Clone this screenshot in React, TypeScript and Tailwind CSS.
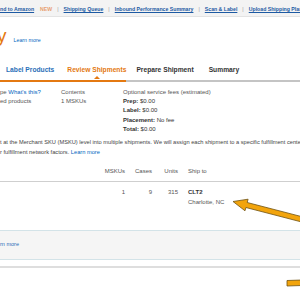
import React from "react";

const font = { fontFamily: '"Liberation Sans", Arial, sans-serif' };

function arrowPoints(tipX: number, tipY: number, endX: number, endY: number) {
  const dx = endX - tipX;
  const dy = endY - tipY;
  const len = Math.hypot(dx, dy);
  const ux = dx / len;
  const uy = dy / len;
  const px = -uy;
  const py = ux;
  const head = 14;
  const hw = 6;
  const sw = 2.6;
  const bx = tipX + ux * head;
  const by = tipY + uy * head;
  const pts = [
    [tipX, tipY],
    [bx - px * hw, by - py * hw],
    [bx - px * sw, by - py * sw],
    [endX - px * sw, endY - py * sw],
    [endX + px * sw, endY + py * sw],
    [bx + px * sw, by + py * sw],
    [bx + px * hw, by + py * hw],
  ];
  return pts.map((p) => p[0].toFixed(1) + "," + p[1].toFixed(1)).join(" ");
}

function TopNav() {
  const sep = <span className="text-[#999] font-normal">|</span>;
  return (
    <div className="h-[17px] pt-[4px] bg-[#f3f3f3] border-b border-[#e3e3e3] flex items-center gap-[5px] whitespace-nowrap text-[5.2px] font-bold text-[#1d5aa3]">
      <span className="underline">nd to Amazon</span>
      <span className="text-[#e8a070] ml-[1px]">NEW</span>
      {sep}
      <span className="underline">Shipping Queue</span>
      {sep}
      <span className="underline">Inbound Performance Summary</span>
      {sep}
      <span className="underline">Scan &amp; Label</span>
      {sep}
      <span className="underline">Upload Shipping Plan</span>
    </div>
  );
}

function Tabs() {
  return (
    <div>
      <div className="h-[27px] pt-[7px] flex items-center whitespace-nowrap text-[6.7px] font-bold">
        <span className="ml-[6px] text-[#2a6fb8]">Label Products</span>
        <span className="ml-[13px] text-[#e47911] relative">
          Review Shipments
          <span className="absolute left-1/2 -translate-x-1/2 top-[11px] w-0 h-0 border-l-[3px] border-r-[3px] border-b-[3px] border-l-transparent border-r-transparent border-b-[#e47911]" />
        </span>
        <span className="ml-[10px] text-[#333]">Prepare Shipment</span>
        <span className="ml-[15px] text-[#333]">Summary</span>
      </div>
      <div className="flex h-[2px]">
        <div className="w-[126px] bg-[#e47911]" />
        <div className="flex-1 bg-[#c4c4c4]" />
      </div>
    </div>
  );
}

function Info() {
  return (
    <div className="pt-[6px] flex text-[6px] leading-[9.2px] text-[#555] whitespace-nowrap">
      <div className="w-[61px]">
        <div>
          pe <span className="text-[#0066c0]">What's this?</span>
        </div>
        <div>ed products</div>
      </div>
      <div className="w-[62px]">
        <div>Contents</div>
        <div>1 MSKUs</div>
      </div>
      <div className="text-[#333]">
        <div className="text-[#555]">Optional service fees (estimated)</div>
        <div>
          <b>Prep:</b> $0.00
        </div>
        <div>
          <b>Label:</b> $0.00
        </div>
        <div>
          <b>Placement:</b> No fee
        </div>
        <div>
          <b>Total:</b> $0.00
        </div>
      </div>
    </div>
  );
}

function Table() {
  return (
    <div className="mt-[9px] text-[6px] leading-[10px] text-[#555] whitespace-nowrap">
      <div className="flex h-[16px] border-b-[1.5px] border-[#cfcfcf]">
        <div className="w-[100px]" />
        <div className="w-[25px] text-right">MSKUs</div>
        <div className="w-[27px] text-right">Cases</div>
        <div className="w-[26px] text-right">Units</div>
        <div className="pl-[10px]">Ship to</div>
      </div>
      <div className="flex pt-[4.5px]">
        <div className="w-[100px]" />
        <div className="w-[25px] text-right">1</div>
        <div className="w-[27px] text-right">9</div>
        <div className="w-[26px] text-right">315</div>
        <div className="pl-[10px]">
          <div className="font-bold text-[#333]">CLT2</div>
          <div>Charlotte, NC</div>
        </div>
      </div>
    </div>
  );
}

export default function App() {
  return (
    <div className="w-[300px] h-[300px] overflow-hidden bg-white relative" style={font}>
      <TopNav />
      <div className="pt-[9px] h-[36px] flex items-baseline whitespace-nowrap">
        <span className="-ml-[3px] text-[19px] leading-[19px] text-[#e47911]">y</span>
        <span className="ml-[7px] text-[5.3px] text-[#0066c0]">Learn more</span>
      </div>
      <Tabs />
      <Info />
      <div className="mt-[3px] text-[5.7px] leading-[10px] text-[#444] whitespace-nowrap">
        <div>
          t at the Merchant SKU (MSKU) level into multiple shipments. We will assign each shipment to a specific fulfillment center based on
        </div>
        <div>
          r fulfillment network factors. <span className="text-[#0066c0]">Learn more</span>
        </div>
      </div>
      <Table />
      <div className="mt-[23px] h-[30px] bg-[#f5f5f5] border-y border-[#d3e3e8] flex items-center text-[5.5px] text-[#2a6fb8] whitespace-nowrap">
        rn more
      </div>
      <div className="mt-[6px] h-[2px] bg-[#dedede]" />
      <svg className="absolute inset-0 pointer-events-none" width="300" height="300" viewBox="0 0 300 300">
        <polygon
          points={arrowPoints(233, 201.5, 312, 222)}
          fill="#f2a40c"
          stroke="#6e5212"
          strokeWidth="0.8"
          strokeLinejoin="round"
        />
        <polygon points="287,280.5 302,280 302,285.5 287,286" fill="#f2a40c" stroke="#6e5212" strokeWidth="0.8" />
      </svg>
    </div>
  );
}
